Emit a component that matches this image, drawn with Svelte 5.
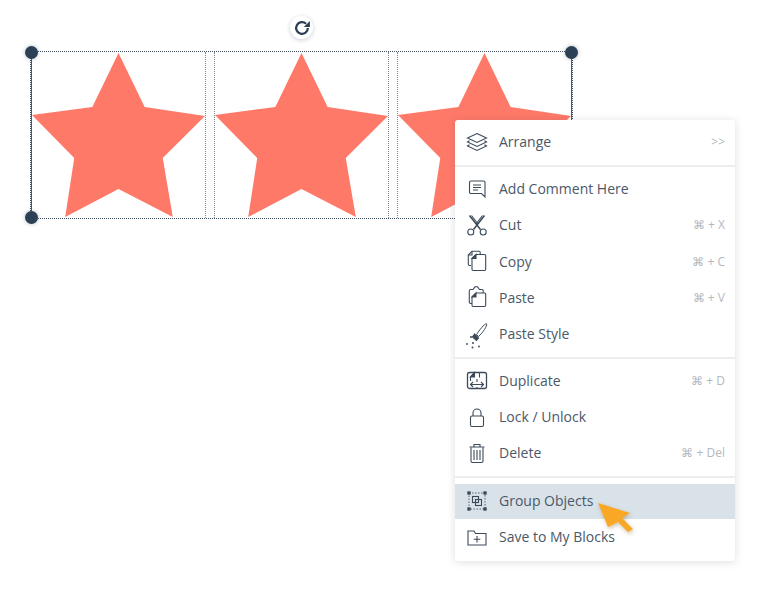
<script lang="ts">
	const cells = [0, 1, 2];

	const handles = ['tl', 'tr', 'bl'];

	const starPoints = '87,1 113,55 173,64 131,106 141,165 87,137 34,165 43,106 1,63 61,55';
</script>

<div class="canvas">
	<div class="rotate">
		<svg width="18" height="18" viewBox="0 0 16 16">
			<path d="M13.200 8a5.200 5.200 0 1 1-1.600-3.800" fill="none" stroke="#2b3f55" stroke-width="2" />
			<path d="M15 1.800v5.400H9.600z" fill="#2b3f55" />
		</svg>
	</div>

	<div class="selection">
		{#each cells as cell (cell)}
			<div class="cell">
				<svg class="star" viewBox="0 0 174 166" preserveAspectRatio="none">
					<polygon points={starPoints} fill="#ff7968" />
				</svg>
			</div>
		{/each}
		{#each handles as handle}
			<span class="handle {handle}"></span>
		{/each}
	</div>

	<div class="menu">
		<div class="section first">
			<div class="row">
				<svg class="icon" viewBox="0 0 22 22">
					<path d="M11 3.500 20.500 8 11 12.500 1.500 8z" />
					<path d="M3.500 10.800 1.500 12 11 16.500 20.500 12l-2-1.200" />
					<path d="M3.500 14.800 1.500 16 11 20.500 20.500 16l-2-1.200" />
				</svg>
				<span class="label">Arrange</span>
				<span class="hint">&gt;&gt;</span>
			</div>
		</div>

		<div class="section">
			<div class="row">
				<svg class="icon" viewBox="0 0 22 22">
					<path d="M5 3h12.500a1.500 1.500 0 0 1 1.500 1.500V19l-3.500-3.500H5A1.500 1.500 0 0 1 3.500 14V4.500A1.500 1.500 0 0 1 5 3z" />
					<path d="M7 7h8M7 9.500h8M7 12h5" />
				</svg>
				<span class="label">Add Comment Here</span>
			</div>
			<div class="row">
				<svg class="icon" viewBox="0 0 22 22">
					<path d="M3.500 1.500 14.500 15.500M18.500 1.500 7.500 15.500" stroke-width="1.500" />
					<path d="M5.500 1.500 12 10M16.500 1.500 10 10" />
					<circle cx="4.800" cy="18" r="3" />
					<circle cx="17.200" cy="18" r="3" />
				</svg>
				<span class="label">Cut</span>
				<span class="hint">⌘ + X</span>
			</div>
			<div class="row">
				<svg class="icon" viewBox="0 0 22 22">
					<path d="M5 15.500H3.500A1.200 1.200 0 0 1 2.300 14.300V5L6 1.300h7a1.200 1.200 0 0 1 1.200 1.200V5" />
					<path d="M6 1.300V5H2.300" />
					<path d="M6 8.500 10 4.500h8.500a1.200 1.200 0 0 1 1.200 1.200v13.600a1.200 1.200 0 0 1-1.200 1.200H7.200A1.200 1.200 0 0 1 6 19.300z" />
					<path d="M10 4.500v4H6z" fill="#3c4a5a" />
				</svg>
				<span class="label">Copy</span>
				<span class="hint">⌘ + C</span>
			</div>
			<div class="row">
				<svg class="icon" viewBox="0 0 22 22">
					<path d="M6 17.500H4.500a1.200 1.200 0 0 1-1.200-1.200V4.700a1.200 1.200 0 0 1 1.200-1.200H7L9 .8h2.500l2 2.700h2.500a1.200 1.200 0 0 1 1.200 1.200V7" />
					<path d="M6 11 10 7h8.500a1.200 1.200 0 0 1 1.200 1.200v11.100a1.200 1.200 0 0 1-1.200 1.200H7.200A1.200 1.200 0 0 1 6 19.300z" />
					<path d="M10 7v4H6z" fill="#3c4a5a" />
				</svg>
				<span class="label">Paste</span>
				<span class="hint">⌘ + V</span>
			</div>
			<div class="row">
				<svg class="icon" viewBox="0 0 22 22">
					<path d="M20.500.8c1.200 1.700-4 9.300-8 12.700l-2-2c2.800-4.200 7.700-10.900 10-10.700z" stroke-width="1" />
					<path d="M8.500 11 12.500 15 10.500 17.500 6.500 14z" fill="#3c4a5a" />
					<circle cx="5" cy="14" r="1" fill="#3c4a5a" stroke="none" />
					<circle cx="1" cy="21" r="0.900" fill="#3c4a5a" stroke="none" />
					<circle cx="6.500" cy="24.500" r="1" fill="#3c4a5a" stroke="none" />
					<circle cx="7" cy="20" r="1" fill="#3c4a5a" stroke="none" />
					<circle cx="13" cy="23.500" r="0.900" fill="#3c4a5a" stroke="none" />
				</svg>
				<span class="label">Paste Style</span>
			</div>
		</div>

		<div class="section">
			<div class="row">
				<svg class="icon" viewBox="0 0 22 22">
					<rect x="1.500" y="3.500" width="19" height="16" rx="2" stroke-width="1.300" />
					<path d="M4.500 12V8L8.500 4" />
					<path d="M8.500 3.500v4.500h-4z" fill="#3c4a5a" />
					<path d="M4.500 15.500h13M7 13 4.500 15.500 7 18M15 13l2.500 2.500L15 18" />
					<path d="M11 10v3M11 18v1.500M13.500 3.500v5" />
				</svg>
				<span class="label">Duplicate</span>
				<span class="hint">⌘ + D</span>
			</div>
			<div class="row">
				<svg class="icon" viewBox="0 0 22 22">
					<rect x="4.500" y="10" width="13" height="10.500" rx="1.500" />
					<path d="M7 10V7a4 4 0 0 1 8 0v3" />
				</svg>
				<span class="label">Lock / Unlock</span>
			</div>
			<div class="row">
				<svg class="icon" viewBox="0 0 22 22">
					<path d="M3.500 5h15M8 5V2.500h6V5" />
					<path d="M5 5.500V19a1.500 1.500 0 0 0 1.500 1.500h9A1.500 1.500 0 0 0 17 19V5.500" />
					<path d="M8 8v10M11 8v10M14 8v10" />
				</svg>
				<span class="label">Delete</span>
				<span class="hint">⌘ + Del</span>
			</div>
		</div>

		<div class="section last">
			<div class="row active">
				<svg class="icon" viewBox="0 0 22 22">
					<rect x="3" y="3" width="16" height="16" stroke-dasharray="1.500 1.500" stroke-width="0.800" />
					<rect x="1.900" y="1.900" width="2.200" height="2.200" fill="#3c4a5a" />
					<rect x="17.900" y="1.900" width="2.200" height="2.200" fill="#3c4a5a" />
					<rect x="1.900" y="17.900" width="2.200" height="2.200" fill="#3c4a5a" />
					<rect x="17.900" y="17.900" width="2.200" height="2.200" fill="#3c4a5a" />
					<rect x="6.500" y="6.500" width="6" height="6" />
					<rect x="9.500" y="9.500" width="6" height="6" />
				</svg>
				<span class="label">Group Objects</span>
			</div>
			<div class="row">
				<svg class="icon" viewBox="0 0 22 22">
					<path d="M2 5h6l1.500 2.500H20V19H2z" />
					<path d="M11 10v6.500M7.700 13.200h6.600" />
				</svg>
				<span class="label">Save to My Blocks</span>
			</div>
		</div>
	</div>

	<svg class="cursor" width="40" height="36" viewBox="0 0 40 36">
		<polygon points="1,1 33,11 25,16 36,27 31,30 21,20 11,25" fill="#f9a825" />
	</svg>
</div>

<style>
	:global(body) {
		margin: 0;
		background: #fff;
	}

	.canvas {
		position: relative;
		width: 768px;
		height: 600px;
		overflow: hidden;
		background: #fff;
		font-family: 'Open Sans', sans-serif;
	}

	.selection {
		position: absolute;
		left: 31px;
		top: 52px;
		width: 541px;
		height: 166px;
		display: flex;
		gap: 8px;
		outline: 1px dotted #3f4f63;
	}

	.cell {
		position: relative;
		flex: 1;
	}

	.cell::after {
		content: '';
		position: absolute;
		inset: 0;
		border-left: 1px dotted #7d858f;
		border-right: 1px dotted #7d858f;
	}

	.cell:first-child::after {
		border-left: 1px solid #4a5a6e;
	}

	.cell:last-of-type::after {
		border-right: 1px solid #4a5a6e;
	}

	.star {
		display: block;
		width: 100%;
		height: 100%;
	}

	.handle {
		position: absolute;
		width: 13px;
		height: 13px;
		border-radius: 50%;
		background: #2b3f55;
		box-shadow: 0 0 4px rgba(43, 63, 85, 0.35);
	}

	.handle.tl {
		left: -6px;
		top: -6px;
	}

	.handle.tr {
		right: -6px;
		top: -6px;
	}

	.handle.bl {
		left: -6px;
		bottom: -6px;
	}

	.rotate {
		position: absolute;
		left: 290px;
		top: 16px;
		width: 23px;
		height: 23px;
		display: flex;
		align-items: center;
		justify-content: center;
		border-radius: 50%;
		background: #fff;
		box-shadow: 0 1px 4px rgba(43, 63, 85, 0.25);
	}

	.menu {
		position: absolute;
		left: 455px;
		top: 120px;
		width: 280px;
		height: 441px;
		background: #fff;
		border-radius: 3px;
		box-shadow: 0 1px 8px rgba(60, 70, 90, 0.18);
		color: #4b5868;
		font-size: 14px;
	}

	.section {
		padding: 3.5px 0 5px;
		border-bottom: 2px solid #ebedf0;
	}

	.section.first {
		padding: 3px 0 6px;
	}

	.section.last {
		padding: 6px 0 0;
		border-bottom: 0;
	}

	.row {
		box-sizing: border-box;
		height: 36.25px;
		display: flex;
		align-items: center;
		padding: 0 10px 0 11px;
	}

	.section.first .row {
		height: 36px;
	}

	.section.last .row {
		height: 35px;
	}

	.row.active {
		padding-bottom: 2px;
		background: #d9e2e9;
	}

	.icon {
		flex: none;
		width: 22px;
		height: 22px;
		margin-right: 11px;
		overflow: visible;
		fill: none;
		stroke: #3c4a5a;
		stroke-width: 1.1;
	}

	.label {
		flex: 1;
	}

	.hint {
		color: #b3b8be;
		font-size: 12px;
	}

	.cursor {
		position: absolute;
		left: 597px;
		top: 502px;
		filter: drop-shadow(1px 2px 2px rgba(120, 90, 30, 0.35));
	}
</style>
